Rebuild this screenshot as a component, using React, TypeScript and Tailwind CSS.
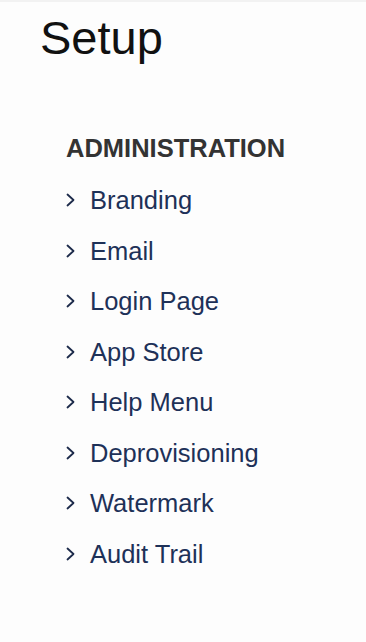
const items = [
  'Branding',
  'Email',
  'Login Page',
  'App Store',
  'Help Menu',
  'Deprovisioning',
  'Watermark',
  'Audit Trail',
];

function Chevron() {
  return (
    <svg width="10" height="14" viewBox="0 0 10 14" fill="none" className="mr-[14px] shrink-0">
      <polyline
        points="1.5,1.5 7.5,7 1.5,12.5"
        stroke="#1c2a4a"
        strokeWidth="1.8"
        strokeLinecap="round"
        strokeLinejoin="round"
      />
    </svg>
  );
}

export default function App() {
  return (
    <div
      className="min-h-screen bg-[#fdfdfd] border-t-2 border-[#f2f2f2]"
      style={{ fontFamily: '"Liberation Sans", Arial, sans-serif' }}
    >
      <div className="pl-[40px] pt-[8px]">
        <h1 className="text-[47px] leading-[56px] text-[#111111]">Setup</h1>
      </div>

      <div className="pl-[66px] pt-[68px]">
        <h2 className="text-[25.5px] leading-[28px] font-bold text-[#333333]">ADMINISTRATION</h2>
        <ul className="mt-[24px] flex flex-col gap-[22.5px]">
          {items.map((item) => (
            <li key={item} className="flex items-center h-[28px]">
              <Chevron />
              <span className="text-[25.5px] leading-[28px] text-[#1e3158]">{item}</span>
            </li>
          ))}
        </ul>
      </div>
    </div>
  );
}
